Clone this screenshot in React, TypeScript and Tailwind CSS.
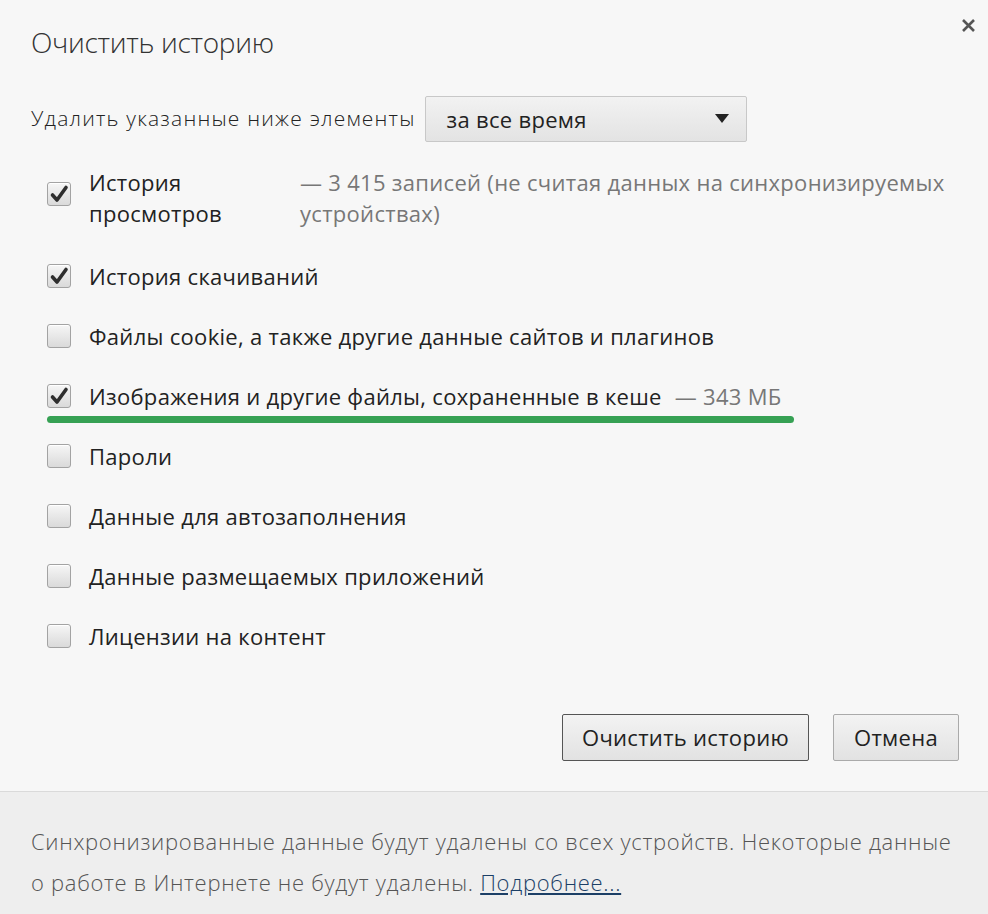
import React from "react";

function Check({ checked }: { checked: boolean }) {
  return (
    <div className="w-[24px] h-[24px] shrink-0 rounded-[3px] border border-[#a3a3a3] bg-gradient-to-b from-[#f6f6f6] to-[#dadada] shadow-[inset_0_1px_0_#ffffff] flex items-center justify-center">
      {checked && (
        <svg width="20" height="20" viewBox="0 0 20 20">
          <path d="M3.5 11 L8 16 L17 3.5" fill="none" stroke="#2e2e2e" strokeWidth="3.6" strokeLinejoin="round" strokeLinecap="round" />
        </svg>
      )}
    </div>
  );
}

const F = "font-['Open_Sans',sans-serif]";

export default function App() {
  const rows: { label: string; checked: boolean }[] = [
    { label: "История скачиваний", checked: true },
    { label: "Файлы cookie, а также другие данные сайтов и плагинов", checked: false },
  ];
  const rows2 = [
    { label: "Пароли", checked: false },
    { label: "Данные для автозаполнения", checked: false },
    { label: "Данные размещаемых приложений", checked: false },
    { label: "Лицензии на контент", checked: false },
  ];
  return (
    <div className={`w-[988px] h-[914px] bg-[#f7f7f7] relative overflow-hidden ${F} text-[#222]`}>
      <div className="absolute right-[12px] top-[18px]">
        <svg width="15" height="15" viewBox="0 0 15 15">
          <path d="M2 2 L13 13 M13 2 L2 13" stroke="#555" strokeWidth="2.6" />
        </svg>
      </div>
      <div className="pl-[31px] pr-[28px]">
        <div className="pt-[23px] h-[89px] text-[28px] font-light text-[#333] leading-[38px] tracking-[-0.3px]">Очистить историю</div>
        <div className="flex items-center h-[48px] mt-[6px]">
          <span className="text-[21px] font-light tracking-[1.2px] text-[#222]">Удалить указанные ниже элементы</span>
          <div className="ml-[9px] w-[322px] h-[46px] border border-[#c8c8c8] rounded-[2px] bg-gradient-to-b from-[#f2f2f2] to-[#e3e3e3] flex items-center pl-[21px] pr-[17px]">
            <span className="text-[22px] tracking-[0.3px] text-[#222] flex-1">за все время</span>
            <svg width="14" height="10" viewBox="0 0 14 10"><path d="M0 0 L14 0 L7 9 Z" fill="#222" /></svg>
          </div>
        </div>
        <div className="pl-[16px] mt-[26px] text-[22px] tracking-[0.3px]">
          <div className="flex h-[77px] items-start">
            <div className="mt-[13px]"><Check checked /></div>
            <div className="ml-[18px] w-[211px] leading-[31px] -mt-[2px] text-[#222]">История<br />просмотров</div>
            <div className="leading-[31px] -mt-[2px] text-[#777] w-[660px]">— 3 415 записей (не считая данных на синхронизируемых устройствах)</div>
          </div>
          {rows.map((r) => (
            <div key={r.label} className="flex h-[60px] items-center">
              <Check checked={r.checked} />
              <span className="ml-[18px]">{r.label}</span>
            </div>
          ))}
          <div className="flex h-[60px] items-center relative">
            <Check checked />
            <span className="ml-[18px]">Изображения и другие файлы, сохраненные в кеше</span>
            <span className="ml-[13px] text-[#777]">— 343 МБ</span>
            <div className="absolute left-0 top-[50px] w-[747px] h-[7px] rounded-full bg-[#36a154]" />
          </div>
          {rows2.map((r) => (
            <div key={r.label} className="flex h-[60px] items-center">
              <Check checked={r.checked} />
              <span className="ml-[18px]">{r.label}</span>
            </div>
          ))}
        </div>
        <div className="flex justify-end mt-[48px] gap-[24px] pr-[1px]">
          <button className="w-[247px] h-[47px] border border-[#555] rounded-[2px] bg-gradient-to-b from-[#f3f3f3] to-[#e2e2e2] text-[22px] tracking-[0.3px] text-[#222]">Очистить историю</button>
          <button className="w-[126px] h-[47px] border border-[#aaa] rounded-[2px] bg-gradient-to-b from-[#f3f3f3] to-[#e2e2e2] text-[22px] tracking-[0.3px] text-[#222]">Отмена</button>
        </div>
      </div>
      <div className="absolute left-0 right-0 top-[791px] bottom-0 border-t border-[#dadada] bg-[#eeeeee] pl-[31px] pt-[29px] text-[22px] font-light text-[#555] leading-[41px] tracking-[0.7px]">
        Синхронизированные данные будут удалены со всех устройств. Некоторые данные<br />
        о работе в Интернете не будут удалены. <span className="underline text-[#1c3f66]">Подробнее...</span>
      </div>
    </div>
  );
}
